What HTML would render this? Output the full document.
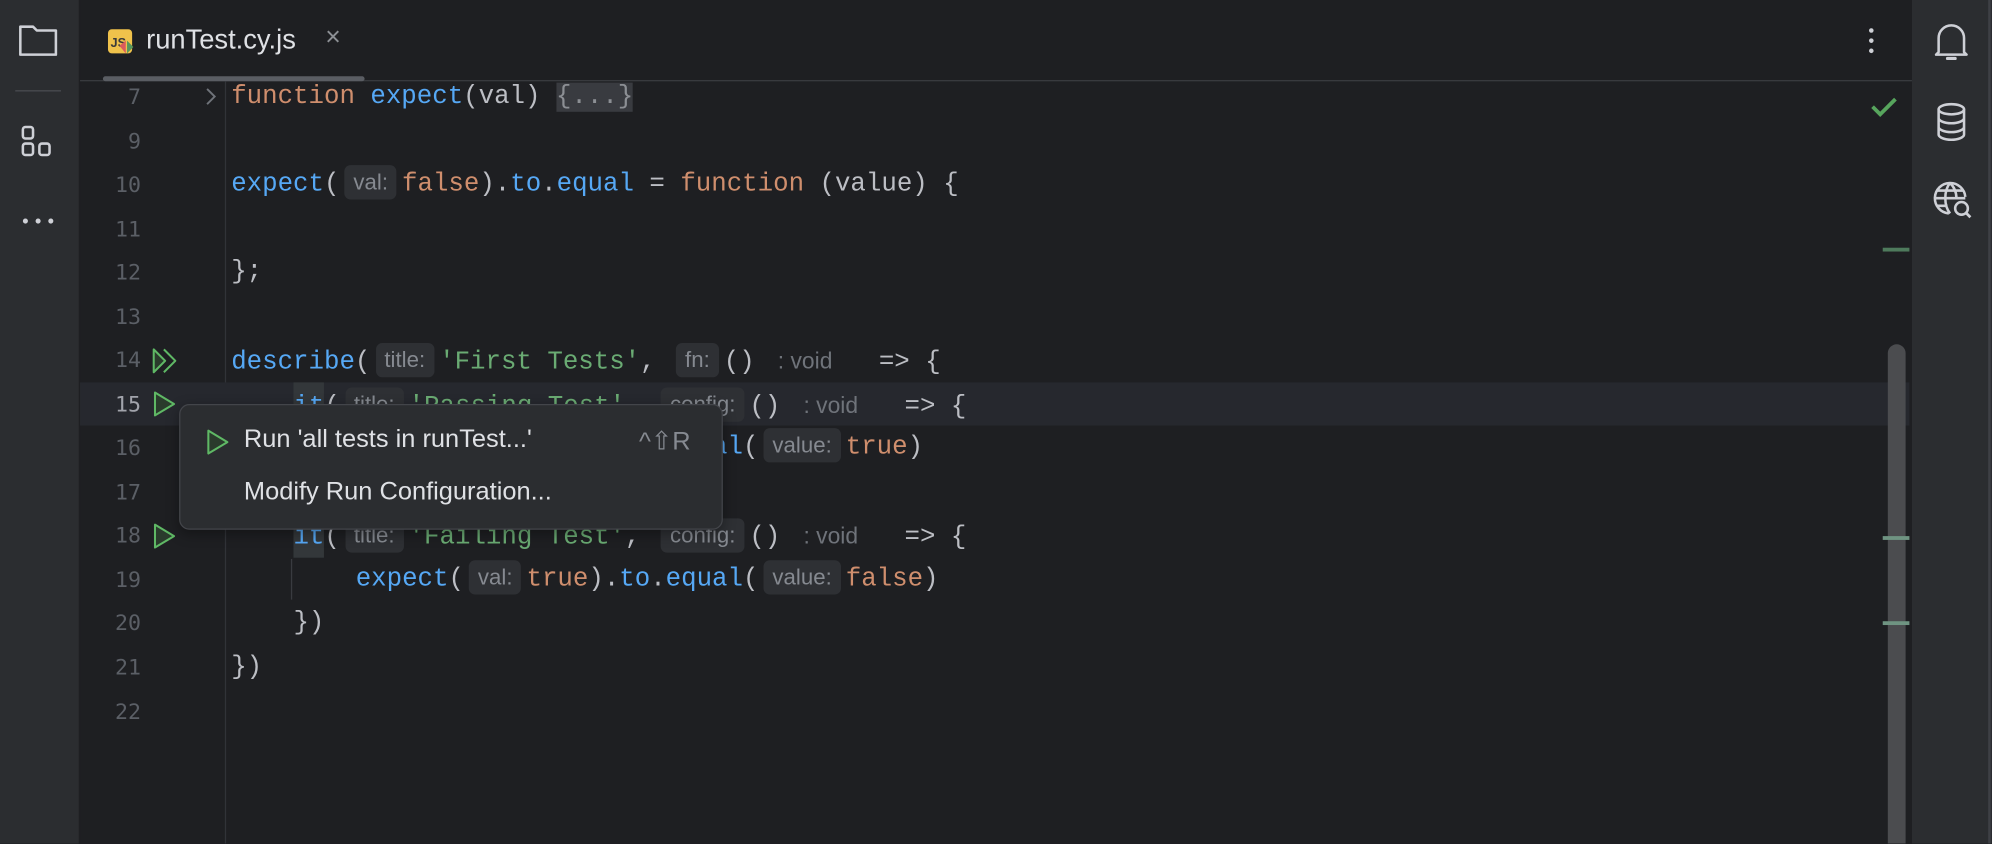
<!DOCTYPE html>
<html><head><meta charset="utf-8"><style>
html,body{margin:0;padding:0;background:#1e1f22;overflow:hidden;width:1992px;height:844px}
#w{position:absolute;left:0;top:0;width:1568px;height:664px;transform:scale(1.2704);transform-origin:0 0;background:#1e1f22;font-family:"Liberation Sans",sans-serif}
.abs{position:absolute}
.ln{position:absolute;left:58px;width:53px;text-align:right;font-family:"DejaVu Sans Mono","Liberation Mono",monospace;font-size:17px;color:#5b5f66;height:34px;line-height:36px}
.cl{position:absolute;font-family:"Liberation Mono","DejaVu Sans Mono",monospace;font-size:20.3px;color:#bcbec4;height:34px;line-height:36px;white-space:pre}
.k{color:#cf8e6d}.f{color:#56a8f5}.s{color:#6aab73}
.h{display:inline-block;font-family:"Liberation Sans",sans-serif;font-size:17.5px;color:#868a91;background:#2e3034;border-radius:5px;height:27px;line-height:27px;padding:0 7px;margin:0 4px;vertical-align:1px}
.v{font-family:"Liberation Sans",sans-serif;font-size:18px;color:#6f737a;margin-left:6px}
</style></head><body><div id="w">
<div class="abs" style="left:0;top:0;width:62px;height:664px;background:#2b2d30;border-right:1px solid #1e1f22"></div>
<svg class="abs" style="left:14px;top:17px" width="32" height="30" viewBox="0 0 32 30"><path d="M2 4h10l3 3h15v19H2z" fill="none" stroke="#ced0d6" stroke-width="2" stroke-linejoin="round"/></svg>
<div class="abs" style="left:12px;top:71px;width:36px;height:1px;background:#4a4c51"></div>
<svg class="abs" style="left:16px;top:98px" width="28" height="28"><rect x="2" y="2" width="8" height="9" rx="2" fill="none" stroke="#ced0d6" stroke-width="2"/><rect x="2" y="15" width="8" height="9" rx="2" fill="none" stroke="#ced0d6" stroke-width="2"/><rect x="15" y="15" width="8" height="9" rx="2" fill="none" stroke="#ced0d6" stroke-width="2"/></svg>
<svg class="abs" style="left:16px;top:168px" width="30" height="12"><circle cx="4" cy="6" r="2" fill="#ced0d6"/><circle cx="14" cy="6" r="2" fill="#ced0d6"/><circle cx="24" cy="6" r="2" fill="#ced0d6"/></svg>
<svg class="abs" style="left:84px;top:22px" width="24" height="24"><rect x="1" y="1" width="19" height="19" rx="3" fill="#f0c24b"/><text x="3" y="15" font-family="Liberation Sans" font-size="10" font-weight="bold" fill="#3a3a3a">JS</text><path d="M10 14l5-4v10z" fill="#db5c5c"/><path d="M16 10l5 5-5 5z" fill="#57965c"/></svg>
<div class="abs" style="left:115px;top:19px;font-size:21.5px;color:#dfe1e5">runTest.cy.js</div>
<div class="abs" style="left:256px;top:18px;font-size:21px;color:#8c8f94">×</div>
<div class="abs" style="left:63px;top:63px;width:1442px;height:1px;background:#393b40"></div>
<div class="abs" style="left:81px;top:60px;width:206px;height:4px;border-radius:2px;background:#5a5d63"></div>
<svg class="abs" style="left:1466px;top:20px" width="14" height="24"><circle cx="7" cy="4" r="1.8" fill="#ced0d6"/><circle cx="7" cy="12" r="1.8" fill="#ced0d6"/><circle cx="7" cy="20" r="1.8" fill="#ced0d6"/></svg>
<div class="abs" style="left:1505px;top:0;width:63px;height:664px;background:#2b2d30"></div>
<div class="abs" style="left:1565px;top:0;width:2px;height:664px;background:#3e4045"></div>
<svg class="abs" style="left:1520px;top:16px" width="32" height="34" viewBox="0 0 32 34"><path d="M6 25V14a10 10 0 0 1 20 0v11l2 2H4z" fill="none" stroke="#ced0d6" stroke-width="2" stroke-linejoin="round"/><path d="M13 30h6" stroke="#ced0d6" stroke-width="2.5" stroke-linecap="round"/></svg>
<svg class="abs" style="left:1520px;top:80px" width="32" height="32" viewBox="0 0 32 32"><ellipse cx="16" cy="6" rx="10" ry="4" fill="none" stroke="#ced0d6" stroke-width="2"/><path d="M6 6v20c0 2 4.5 4 10 4s10-2 10-4V6M6 13c0 2 4.5 4 10 4s10-2 10-4M6 20c0 2 4.5 4 10 4s10-2 10-4" fill="none" stroke="#ced0d6" stroke-width="2"/></svg>
<svg class="abs" style="left:1520px;top:141px" width="34" height="34" viewBox="0 0 34 34"><path d="M27 14A12 12 0 1 0 14 27" fill="none" stroke="#ced0d6" stroke-width="2"/><path d="M3 15h24M15 3c-5 6-5 18 0 24M15 3c4 4 5 9 5 12M5 9h20M5 21h8" fill="none" stroke="#ced0d6" stroke-width="2"/><circle cx="24" cy="23" r="5" fill="none" stroke="#ced0d6" stroke-width="2"/><path d="M28 27l3 3" stroke="#ced0d6" stroke-width="2.2"/></svg>
<div class="abs" style="left:177px;top:64px;width:1px;height:600px;background:#313338"></div>
<div class="abs" style="left:63px;top:301px;width:1440px;height:34px;background:#26282e"></div>
<div class="abs" style="left:229px;top:440px;width:1px;height:32px;background:#393b40"></div>
<div class="abs" style="left:231px;top:301px;width:24px;height:34px;background:#33373a"></div>
<div class="abs" style="left:231px;top:405px;width:24px;height:34px;background:#33373a"></div>
<div class="abs" style="left:1486px;top:271px;width:14px;height:393px;border-radius:7px 7px 0 0;background:#4b4c4f"></div>
<div class="abs" style="left:1482px;top:195px;width:21px;height:3px;background:#4e7a5c"></div>
<div class="abs" style="left:1482px;top:422px;width:21px;height:3px;background:#6f9482"></div>
<div class="abs" style="left:1482px;top:489px;width:21px;height:3px;background:#6f9482"></div>
<svg class="abs" style="left:1472px;top:75px" width="22" height="18"><path d="M2 9l6 6L20 3" fill="none" stroke="#57a55d" stroke-width="3"/></svg>
<div class="ln" style="top:59px">7</div><div class="ln" style="top:94px">9</div><div class="ln" style="top:128px">10</div><div class="ln" style="top:163px">11</div><div class="ln" style="top:197px">12</div><div class="ln" style="top:232px">13</div><div class="ln" style="top:266px">14</div><div class="ln" style="top:301px;color:#a1a3ab">15</div><div class="ln" style="top:335px">16</div><div class="ln" style="top:370px">17</div><div class="ln" style="top:404px">18</div><div class="ln" style="top:439px">19</div><div class="ln" style="top:473px">20</div><div class="ln" style="top:508px">21</div><div class="ln" style="top:543px">22</div>
<svg class="abs" style="left:160px;top:68px" width="12" height="16"><path d="M3 2l6 6-6 6" fill="none" stroke="#6f737a" stroke-width="1.5"/></svg>
<svg class="abs" style="left:119px;top:273px" width="24" height="22"><path d="M2 2l9 9-9 9z" fill="#2a3b2c" stroke="#5fb865" stroke-width="1.6" stroke-linejoin="round"/><path d="M10 2l9 9-9 9" fill="none" stroke="#5fb865" stroke-width="1.6" stroke-linejoin="round"/></svg>
<svg class="abs" style="left:120px;top:307px" width="22" height="22"><path d="M2 2l15 9-15 9z" fill="#2a3b2c" stroke="#5fb865" stroke-width="1.6" stroke-linejoin="round"/></svg>
<svg class="abs" style="left:120px;top:411px" width="22" height="22"><path d="M2 2l15 9-15 9z" fill="#2a3b2c" stroke="#5fb865" stroke-width="1.6" stroke-linejoin="round"/></svg>
<div class="cl" style="left:182px;top:59px"><span class="k">function</span> <span class="f">expect</span>(val) <span style="background:#393b40;color:#8c8f94">{...}</span></div>
<div class="cl" style="left:182px;top:128px"><span class="f">expect</span>(<span class="h">val:</span><span class="k">false</span>).<span class="f">to</span>.<span class="f">equal</span> = <span class="k">function</span> (value) {</div>
<div class="cl" style="left:182px;top:197px">};</div>
<div class="cl" style="left:182px;top:266px"><span class="f">describe</span>(<span class="h">title:</span><span class="s">'First Tests'</span>, <span class="h">fn:</span>() <span class="v">: void</span>   =&gt; {</div>
<div class="cl" style="left:231px;top:301px"><span class="f">it</span>(<span class="h">title:</span><span class="s">'Passing Test'</span>, <span class="h">config:</span>() <span class="v">: void</span>   =&gt; {</div>
<div class="cl" style="left:280px;top:335px"><span class="f">expect</span>(<span class="h">val:</span><span class="k">true</span>).<span class="f">to</span>.<span class="f">equal</span>(<span class="h">value:</span><span class="k">true</span>)</div>
<div class="cl" style="left:231px;top:404px"><span class="f">it</span>(<span class="h">title:</span><span class="s">'Failing Test'</span>, <span class="h">config:</span>() <span class="v">: void</span>   =&gt; {</div>
<div class="cl" style="left:280px;top:439px"><span class="f">expect</span>(<span class="h">val:</span><span class="k">true</span>).<span class="f">to</span>.<span class="f">equal</span>(<span class="h">value:</span><span class="k">false</span>)</div>
<div class="cl" style="left:231px;top:473px">})</div>
<div class="cl" style="left:182px;top:508px">})</div>
<div class="abs" style="left:141px;top:318px;width:426px;height:97px;background:#2b2d30;border:1px solid #43454a;border-radius:8px;box-shadow:0 3px 10px rgba(0,0,0,.35)"></div>
<svg class="abs" style="left:162px;top:337px" width="20" height="22"><path d="M2 2l15 9-15 9z" fill="#2a3b2c" stroke="#5fb865" stroke-width="1.6" stroke-linejoin="round"/></svg>
<div class="abs" style="left:192px;top:335px;font-size:20px;color:#dfe1e5">Run 'all tests in runTest...'</div>
<div class="abs" style="left:503px;top:335px;font-size:20px;color:#868a91">^⇧R</div>
<div class="abs" style="left:192px;top:376px;font-size:20px;color:#dfe1e5">Modify Run Configuration...</div>
</div></body></html>
